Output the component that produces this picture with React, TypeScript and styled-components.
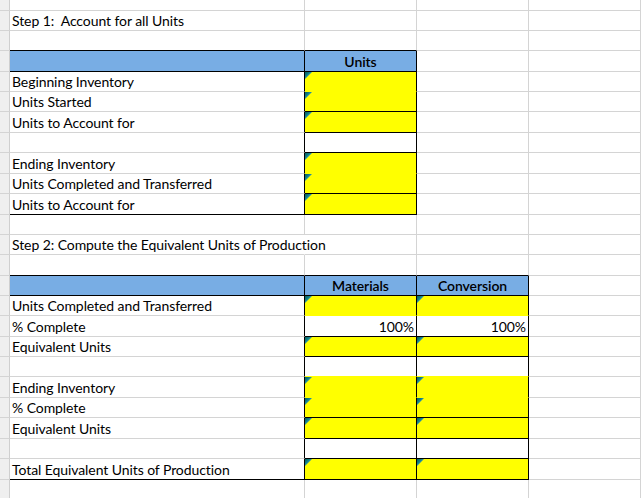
import React from "react";
import styled, { createGlobalStyle, css } from "styled-components";

const Global = createGlobalStyle`
  html, body { margin: 0; padding: 0; background: #ffffff; }
  body { width: 641px; height: 498px; overflow: hidden; }
`;

const GRID = "#d4d4d4";
const BLACK = "#000000";
const BLUE = "#78ade4";
const YELLOW = "#ffff00";

type Fill = "blue" | "yellow" | undefined;
type Edge = "black" | "fill" | "yellow" | undefined;

interface CellSpec {
  text?: string;
  fill?: Fill;
  bb?: Edge;
  br?: boolean;
  align?: "left" | "center" | "right";
  head?: boolean;
  mark?: boolean;
  spill?: boolean;
}

interface RowSpec {
  h: number;
  A?: CellSpec;
  B?: CellSpec;
  C?: CellSpec;
  D?: CellSpec;
}

const fillColor = (f: Fill) =>
  f === "blue" ? BLUE : f === "yellow" ? YELLOW : "transparent";

const edgeColor = (e: Edge, f: Fill) => {
  if (e === "black") return BLACK;
  if (e === "yellow") return YELLOW;
  if (e === "fill") return fillColor(f);
  return GRID;
};

const Sheet = styled.div`
  display: flex;
  flex-direction: column;
  width: 641px;
  font-family: Lato, "Liberation Sans", sans-serif;
  font-size: 14px;
  letter-spacing: -0.08px;
  color: #000;
`;

const Row = styled.div<{ $h: number }>`
  display: grid;
  grid-template-columns: 10px 295px 112px 112px 112px;
  height: ${(p) => p.$h}px;
`;

const RowHead = styled.div`
  background: #efefef;
  border-right: 1px solid #cfcfcf;
  border-bottom: 1px solid ${GRID};
  box-sizing: border-box;
`;

const Cell = styled.div<{
  $fill: Fill;
  $bb: Edge;
  $br?: boolean;
  $align?: string;
  $head?: boolean;
  $spill?: boolean;
}>`
  position: relative;
  box-sizing: border-box;
  min-width: 0;
  display: flex;
  align-items: flex-end;
  justify-content: ${(p) =>
    p.$align === "center" ? "center" : p.$align === "right" ? "flex-end" : "flex-start"};
  padding: 0 2px 1px 2px;
  line-height: 16px;
  white-space: pre;
  background: ${(p) => fillColor(p.$fill)};
  border-bottom: 1px solid ${(p) => edgeColor(p.$bb, p.$fill)};
  border-right: 1px solid
    ${(p) => (p.$br ? BLACK : p.$spill ? "#ffffff" : GRID)};
  ${(p) =>
    p.$head &&
    css`
      font-weight: 600;
    `}
`;

const Marker = styled.span`
  position: absolute;
  left: 0;
  top: 0;
  width: 7px;
  height: 7px;
  background: linear-gradient(
    135deg,
    #04605c 0%,
    #0f7a7c 30%,
    #2390a8 46%,
    rgba(35, 144, 168, 0) 54%
  );
`;

const Text = styled.span`
  position: relative;
  z-index: 1;
`;

const Y: CellSpec = { fill: "yellow", mark: true, br: true, bb: "black" };
const Yopen: CellSpec = { fill: "yellow", mark: true, br: true, bb: "fill" };

const rows: RowSpec[] = [
  { h: 11 },
  { h: 20, A: { text: "Step 1:  Account for all Units" } },
  { h: 20, A: { bb: "black" }, B: { bb: "black" } },
  {
    h: 21,
    A: { fill: "blue", br: true, bb: "black" },
    B: { fill: "blue", br: true, bb: "black", text: "Units", align: "center", head: true },
  },
  { h: 20, A: { text: "Beginning Inventory", br: true }, B: Yopen },
  { h: 20, A: { text: "Units Started", br: true }, B: Y },
  { h: 21, A: { text: "Units to Account for", br: true }, B: Y },
  { h: 20, A: { br: true }, B: { br: true, bb: "black" } },
  { h: 21, A: { text: "Ending Inventory", br: true }, B: Yopen },
  { h: 20, A: { text: "Units Completed and Transferred", br: true }, B: Y },
  { h: 21, A: { text: "Units to Account for", br: true, bb: "black" }, B: Y },
  { h: 20 },
  { h: 20, A: { text: "Step 2: Compute the Equivalent Units of Production", spill: true } },
  { h: 21, A: { bb: "black" }, B: { bb: "black" }, C: { bb: "black" } },
  {
    h: 20,
    A: { fill: "blue", br: true, bb: "black" },
    B: { fill: "blue", br: true, bb: "black", text: "Materials", align: "center", head: true },
    C: { fill: "blue", br: true, bb: "black", text: "Conversion", align: "center", head: true },
  },
  { h: 20, A: { text: "Units Completed and Transferred", br: true }, B: Yopen, C: Yopen },
  {
    h: 21,
    A: { text: "% Complete", br: true },
    B: { text: "100%", align: "right", br: true, bb: "black" },
    C: { text: "100%", align: "right", br: true, bb: "black" },
  },
  { h: 20, A: { text: "Equivalent Units", br: true }, B: Y, C: Y },
  { h: 20, A: { br: true }, B: { br: true, bb: "yellow" }, C: { br: true, bb: "yellow" } },
  { h: 21, A: { text: "Ending Inventory", br: true }, B: Yopen, C: Yopen },
  { h: 20, A: { text: "% Complete", br: true }, B: Y, C: Y },
  { h: 21, A: { text: "Equivalent Units", br: true }, B: Y, C: Y },
  { h: 20, A: { br: true }, B: { br: true, bb: "black" }, C: { br: true, bb: "black" } },
  {
    h: 21,
    A: { text: "Total Equivalent Units of Production", br: true, bb: "black" },
    B: Y,
    C: Y,
  },
  { h: 20 },
];

const SheetCell: React.FC<{ spec?: CellSpec }> = ({ spec = {} }) => (
  <Cell
    $fill={spec.fill}
    $bb={spec.bb}
    $br={spec.br}
    $align={spec.align}
    $head={spec.head}
    $spill={spec.spill}
  >
    {spec.mark && <Marker />}
    {spec.text && <Text>{spec.text}</Text>}
  </Cell>
);

export default function App() {
  return (
    <>
      <Global />
      <Sheet>
        {rows.map((r, i) => (
          <Row key={i} $h={r.h}>
            <RowHead />
            <SheetCell spec={r.A} />
            <SheetCell spec={r.B} />
            <SheetCell spec={r.C} />
            <SheetCell spec={r.D} />
          </Row>
        ))}
      </Sheet>
    </>
  );
}
